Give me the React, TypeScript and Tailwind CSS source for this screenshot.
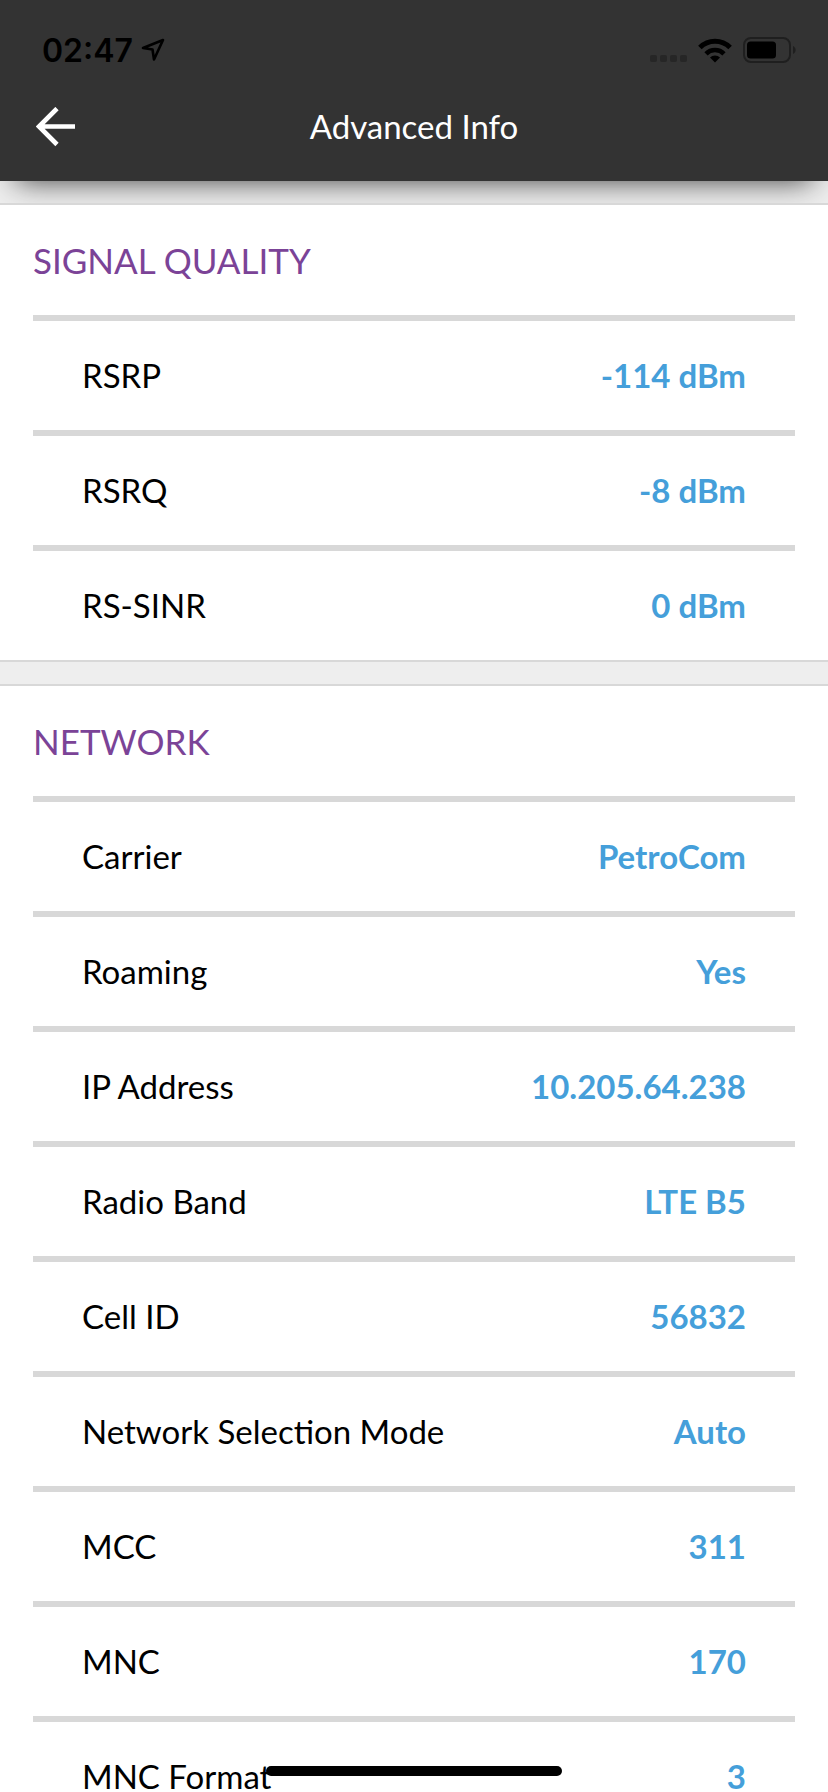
import { ReactNode } from "react";

interface InfoRow {
  label: string;
  value: string;
}

interface InfoSectionProps {
  title: string;
  rows: InfoRow[];
}

const signalRows: InfoRow[] = [
  { label: "RSRP", value: "-114 dBm" },
  { label: "RSRQ", value: "-8 dBm" },
  { label: "RS-SINR", value: "0 dBm" },
];

const networkRows: InfoRow[] = [
  { label: "Carrier", value: "PetroCom" },
  { label: "Roaming", value: "Yes" },
  { label: "IP Address", value: "10.205.64.238" },
  { label: "Radio Band", value: "LTE B5" },
  { label: "Cell ID", value: "56832" },
  { label: "Network Selection Mode", value: "Auto" },
  { label: "MCC", value: "311" },
  { label: "MNC", value: "170" },
  { label: "MNC Format", value: "3" },
];

function StatusBar() {
  return (
    <div className="flex h-[72px] items-center justify-between pt-7 pr-8 pl-[42px] text-black">
      <div className="flex items-center gap-2">
        <span className="pt-0.5 font-[Inter,sans-serif] text-[32px] leading-11 font-semibold">
          02:47
        </span>
        {/* Location */}
        <svg width="24" height="24" viewBox="0 0 24 24" fill="none">
          <path
            d="M2 10 L22 2 L13 21.5 L11.5 11.5 Z"
            stroke="currentColor"
            strokeWidth="2.6"
            strokeLinejoin="round"
          />
        </svg>
      </div>
      <div className="flex items-center">
        {/* No signal */}
        <svg className="mt-4 mr-[11px]" width="37" height="8" viewBox="0 0 37 8">
          <g fill="#262626">
            <rect x="0" y="1" width="7" height="7" rx="2" />
            <rect x="10" y="1" width="7" height="7" rx="2" />
            <rect x="20" y="1" width="7" height="7" rx="2" />
            <rect x="30" y="1" width="7" height="7" rx="2" />
          </g>
        </svg>
        {/* Wifi */}
        <svg className="mr-[11px]" width="34" height="25" viewBox="0 0 34 25" fill="none">
          <path
            d="M1.9 9.6 A21.3 21.3 0 0 1 32.1 9.6"
            stroke="currentColor"
            strokeWidth="5"
          />
          <path
            d="M8 15.8 A12.7 12.7 0 0 1 26 15.8"
            stroke="currentColor"
            strokeWidth="4.6"
          />
          <path d="M17 24.6 L12 19.6 A7 7 0 0 1 22 19.6 Z" fill="currentColor" />
        </svg>
        {/* Battery */}
        <svg width="53" height="26" viewBox="0 0 53 26" fill="none">
          <rect x="1" y="1" width="46" height="24" rx="7" stroke="#1f1f1f" strokeWidth="2" />
          <rect x="4" y="4.5" width="29" height="17" rx="3.5" fill="currentColor" />
          <path d="M50 9 C53.5 10.5 53.5 15.5 50 17 Z" fill="#1f1f1f" />
        </svg>
      </div>
    </div>
  );
}

function Header({ children }: { children: ReactNode }) {
  return (
    <header className="relative shrink-0 bg-[#333333] shadow-[0_16px_28px_-16px_rgba(0,0,0,0.75)]">
      <StatusBar />
      <div className="grid h-[109px] grid-cols-[1fr_auto_1fr] items-center px-9">
        <button aria-label="Back" className="w-10 cursor-pointer text-white">
          <svg width="40" height="40" viewBox="0 0 40 40" fill="none">
            <path
              d="M21 1.5 L3 19.5 L21 37.5 M3 19.5 H39"
              stroke="currentColor"
              strokeWidth="4.6"
            />
          </svg>
        </button>
        {children}
      </div>
    </header>
  );
}

function InfoSection({ title, rows }: InfoSectionProps) {
  return (
    <section className="relative border-y-2 border-[#d8d8d8] bg-white px-[33px]">
      <h2 className="flex h-[110px] items-center text-[35px] text-[#7b4397]">
        {title}
      </h2>
      <table className="w-full border-separate border-spacing-0 text-[33px]">
        <tbody>
          {rows.map((row) => (
            <tr key={row.label} className="h-[115px]">
              <th
                scope="row"
                className="border-t-6 border-[#d8d8d8] pl-[49px] text-left font-normal text-black"
              >
                {row.label}
              </th>
              <td className="border-t-6 border-[#d8d8d8] pr-[49px] text-right font-bold text-[#459fda]">
                {row.value}
              </td>
            </tr>
          ))}
        </tbody>
      </table>
    </section>
  );
}

export default function App() {
  return (
    <div className="relative flex h-screen flex-col overflow-hidden bg-[#eeeeee] font-[Lato,sans-serif]">
      <Header>
        <h1 className="text-[33px] text-white">Advanced Info</h1>
      </Header>
      <main className="flex flex-col gap-[22px] pt-[22px]">
        <InfoSection title="SIGNAL QUALITY" rows={signalRows} />
        <InfoSection title="NETWORK" rows={networkRows} />
      </main>
      {/* Home indicator */}
      <div className="absolute bottom-4 left-1/2 h-2.5 w-[296px] -translate-x-1/2 rounded-full bg-black" />
    </div>
  );
}
